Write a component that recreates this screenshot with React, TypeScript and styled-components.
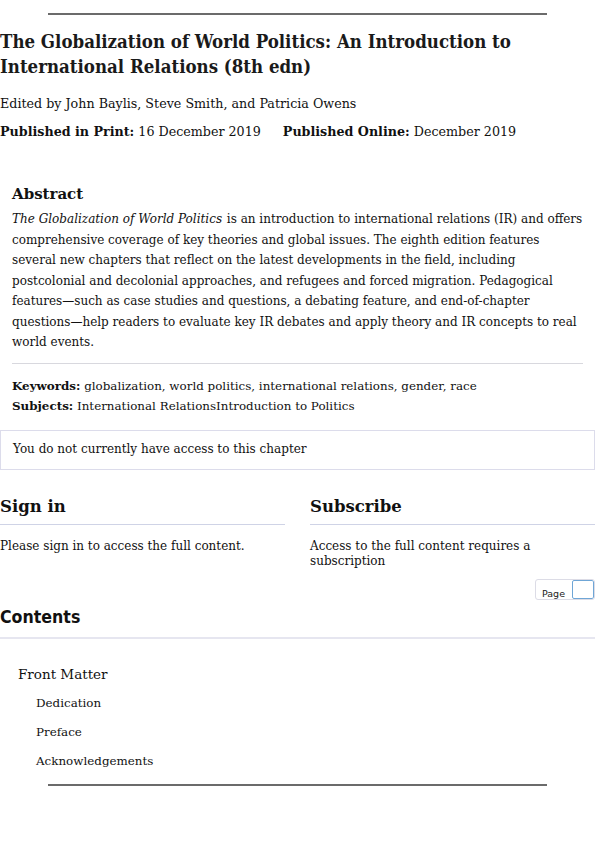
import React from "react";
import styled, { createGlobalStyle } from "styled-components";

const Global = createGlobalStyle`
  html, body { margin: 0; padding: 0; background: #fff; }
  body { font-family: "DejaVu Serif", serif; color: #111; }
`;

const Page = styled.div`
  width: 595px;
  display: flex;
  flex-direction: column;
`;

const Rule = styled.hr<{ $top: number; $bottom: number }>`
  width: 499px;
  margin: ${(p) => p.$top}px auto ${(p) => p.$bottom}px;
  border: 0;
  height: 2px;
  background: #6b6b6b;
`;

const Title = styled.h1`
  margin: 0;
  font-family: "DejaVu Serif Condensed", "DejaVu Serif", serif;
  font-weight: 700;
  font-size: 18.5px;
  line-height: 25px;
  color: #1a1a1a;
`;

const Meta = styled.p<{ $top: number }>`
  margin: ${(p) => p.$top}px 0 0;
  font-family: "DejaVu Serif", serif;
  font-size: 12.7px;
  line-height: 16px;
  display: flex;
  gap: 22px;
`;

const Label = styled.b`
  font-weight: 700;
`;

const Abstract = styled.section`
  margin-top: 44px;
  padding: 0 12px;
  display: flex;
  flex-direction: column;
`;

const AbstractHead = styled.h2`
  margin: 0;
  font-size: 15px;
  line-height: 20px;
  font-weight: 700;
`;

const AbstractText = styled.p`
  margin: 5px 0 0;
  font-family: "DejaVu Serif", serif;
  font-size: 12px;
  line-height: 20.5px;

  i {
    padding-right: 1px;
  }
`;

const Divider = styled.div`
  margin-top: 10px;
  height: 1px;
  background: #d8d8de;
`;

const Tags = styled.div`
  margin-top: 12px;
  font-family: "DejaVu Serif", serif;
  font-size: 11.9px;
  line-height: 20.5px;
`;

const AccessBox = styled.div`
  margin-top: 13px;
  border: 1px solid #dcdceb;
  padding: 10px 12px 11px;
  font-family: "DejaVu Serif", serif;
  font-size: 12px;
  line-height: 17px;
`;

const Cols = styled.div`
  margin-top: 26px;
  display: grid;
  grid-template-columns: 285px 285px;
  column-gap: 25px;
`;

const Col = styled.div`
  display: flex;
  flex-direction: column;
`;

const ColHead = styled.h3`
  margin: 0;
  font-size: 16.5px;
  line-height: 22px;
  font-weight: 700;
  padding-bottom: 6px;
  border-bottom: 1px solid #cfd3e6;
`;

const ColText = styled.p`
  margin: 14px 0 0;
  font-family: "DejaVu Serif", serif;
  font-size: 12px;
  line-height: 15px;
`;

const PagerRow = styled.div`
  margin-top: 10px;
  display: flex;
  justify-content: flex-end;
`;

const Pager = styled.div`
  width: 58px;
  height: 19px;
  border: 1px solid #dcdce6;
  border-radius: 3px;
  display: flex;
  align-items: flex-end;
  overflow: hidden;
`;

const PagerLabel = styled.span`
  font-family: "DejaVu Sans", sans-serif;
  font-size: 9.5px;
  line-height: 10px;
  color: #222;
  padding-left: 6px;
  flex: 1;
`;

const PagerInput = styled.span`
  width: 22px;
  height: 19px;
  box-sizing: border-box;
  border: 1px solid #6fa6d6;
  border-radius: 2px;
  align-self: stretch;
`;

const ContentsHead = styled.h2`
  margin: 6px 0 0;
  font-family: "DejaVu Sans Condensed", "DejaVu Sans", sans-serif;
  font-size: 17.6px;
  line-height: 22px;
  font-weight: 700;
  padding-bottom: 9px;
  border-bottom: 2px solid #e6e6f0;
`;

const TocList = styled.ul`
  list-style: none;
  margin: 27px 0 0;
  padding: 0 0 0 18px;
  font-family: "DejaVu Serif", serif;
`;

const TocTop = styled.li`
  font-size: 13.5px;
  line-height: 17px;
`;

const TocChild = styled.li`
  margin: 12px 0 0 18px;
  font-size: 11.9px;
  line-height: 17px;
`;

export default function App() {
  return (
    <Page>
      <Global />
      <Rule $top={13} $bottom={14} />
      <Title>
        The Globalization of World Politics: An Introduction to International Relations (8th edn)
      </Title>
      <Meta $top={17}>Edited by John Baylis, Steve Smith, and Patricia Owens</Meta>
      <Meta $top={12}>
        <span>
          <Label>Published in Print:</Label> 16 December 2019
        </span>
        <span>
          <Label>Published Online:</Label> December 2019
        </span>
      </Meta>
      <Abstract>
        <AbstractHead>Abstract</AbstractHead>
        <AbstractText>
          <i>The Globalization of World Politics</i> is an introduction to international relations (IR) and offers
          comprehensive coverage of key theories and global issues. The eighth edition features several new
          chapters that reflect on the latest developments in the field, including postcolonial and decolonial
          approaches, and refugees and forced migration. Pedagogical features—such as case studies and
          questions, a debating feature, and end-of-chapter questions—help readers to evaluate key IR debates
          and apply theory and IR concepts to real world events.
        </AbstractText>
        <Divider />
        <Tags>
          <div>
            <Label>Keywords:</Label> globalization, world politics, international relations, gender, race
          </div>
          <div>
            <Label>Subjects:</Label> International RelationsIntroduction to Politics
          </div>
        </Tags>
      </Abstract>
      <AccessBox>You do not currently have access to this chapter</AccessBox>
      <Cols>
        <Col>
          <ColHead>Sign in</ColHead>
          <ColText>Please sign in to access the full content.</ColText>
        </Col>
        <Col>
          <ColHead>Subscribe</ColHead>
          <ColText>Access to the full content requires a subscription</ColText>
        </Col>
      </Cols>
      <PagerRow>
        <Pager>
          <PagerLabel>Page</PagerLabel>
          <PagerInput />
        </Pager>
      </PagerRow>
      <ContentsHead>Contents</ContentsHead>
      <TocList>
        <TocTop>Front Matter</TocTop>
        <TocChild>Dedication</TocChild>
        <TocChild>Preface</TocChild>
        <TocChild>Acknowledgements</TocChild>
      </TocList>
      <Rule $top={14} $bottom={40} />
    </Page>
  );
}
